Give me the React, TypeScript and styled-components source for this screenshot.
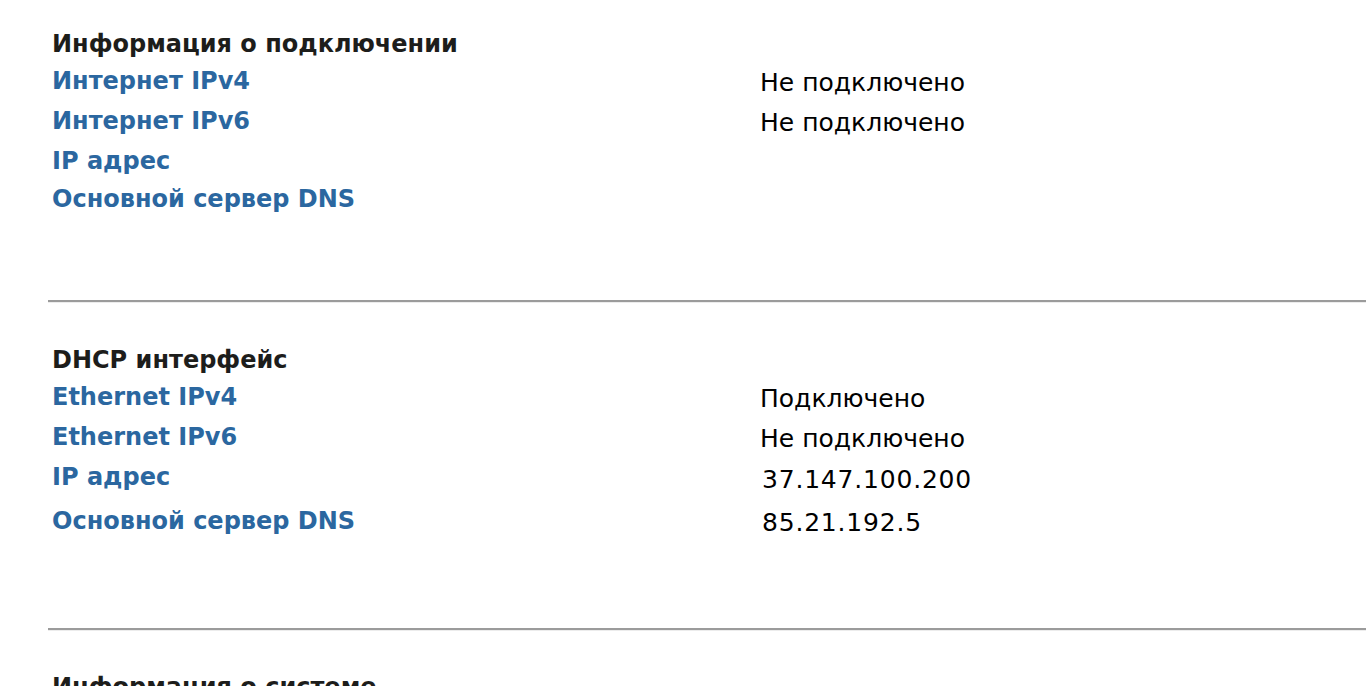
import React from "react";
import styled, { createGlobalStyle } from "styled-components";

const Global = createGlobalStyle`
  html, body { margin: 0; padding: 0; background: #fff; }
  body { font-family: "DejaVu Sans", Verdana, sans-serif; overflow: hidden; }
`;

const Page = styled.div`
  padding: 24px 0 0 48px;
`;

const Section = styled.section<{ $top: number; $bottom: number }>`
  padding: ${(p) => p.$top}px 0 ${(p) => p.$bottom}px 4px;
`;

const Heading = styled.h2`
  margin: 0;
  height: 40px;
  line-height: 40px;
  font-size: 24px;
  font-weight: bold;
  color: #1d1d1b;
  white-space: nowrap;
`;

const Grid = styled.div`
  display: grid;
  grid-template-columns: 708px 1fr;
`;

const Label = styled.div<{ $h: number }>`
  height: ${(p) => p.$h}px;
  line-height: 35px;
  font-size: 24px;
  font-weight: bold;
  color: #2b67a0;
  white-space: nowrap;
`;

const Value = styled.div<{ $h: number; $lh: number; $numeric: boolean }>`
  height: ${(p) => p.$h}px;
  line-height: ${(p) => p.$lh}px;
  font-size: 25px;
  color: #000;
  white-space: nowrap;
  letter-spacing: ${(p) => (p.$numeric ? "0.8px" : "0")};
  padding-left: ${(p) => (p.$numeric ? "2px" : "0")};
`;

const Rule = styled.hr`
  margin: 0;
  border: 0;
  height: 2px;
  background: #9b9b9b;
  border-bottom: 1px solid #ececec;
`;

type Row = { label: string; value?: string; h: number; lh?: number };

const sections: { title: string; rows: Row[]; top: number; bottom: number }[] = [
  {
    title: "Информация о подключении",
    top: 0,
    bottom: 78,
    rows: [
      { label: "Интернет IPv4", value: "Не подключено", h: 40 },
      { label: "Интернет IPv6", value: "Не подключено", h: 40 },
      { label: "IP адрес", h: 38 },
      { label: "Основной сервер DNS", h: 40 },
    ],
  },
  {
    title: "DHCP интерфейс",
    top: 37,
    bottom: 84,
    rows: [
      { label: "Ethernet IPv4", value: "Подключено", h: 40 },
      { label: "Ethernet IPv6", value: "Не подключено", h: 40 },
      { label: "IP адрес", value: "37.147.100.200", h: 44, lh: 40 },
      { label: "Основной сервер DNS", value: "85.21.192.5", h: 40 },
    ],
  },
];

export default function App() {
  return (
    <>
      <Global />
      <Page>
        {sections.map((s) => (
          <React.Fragment key={s.title}>
            <Section $top={s.top} $bottom={s.bottom}>
              <Heading>{s.title}</Heading>
              <Grid>
                {s.rows.map((r) => (
                  <React.Fragment key={r.label}>
                    <Label $h={r.h}>{r.label}</Label>
                    <Value
                      $h={r.h}
                      $lh={r.lh ?? 38}
                      $numeric={/^[\d.]+$/.test(r.value ?? "")}
                    >
                      {r.value ?? ""}
                    </Value>
                  </React.Fragment>
                ))}
              </Grid>
            </Section>
            <Rule />
          </React.Fragment>
        ))}
        <Section $top={36} $bottom={40}>
          <Heading>Информация о системе</Heading>
        </Section>
      </Page>
    </>
  );
}
